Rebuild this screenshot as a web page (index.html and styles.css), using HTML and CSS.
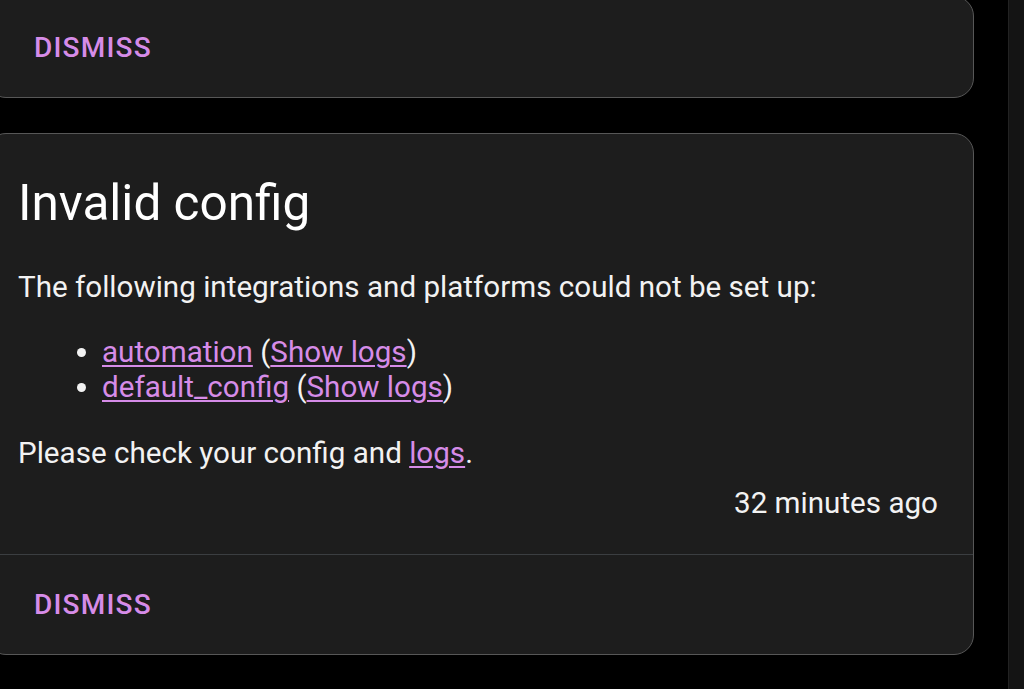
FILE: index.html
```html
<!DOCTYPE html>
<html lang="en">
<head>
    <meta charset="UTF-8">
    <meta name="viewport" content="width=device-width, initial-scale=1.0">
    <title>Notifications</title>
    <link rel="stylesheet" href="styles.css">
</head>
<body>
    <div class="main">
        <div class="feed">
            <div class="card card-cut">
                <div class="card-actions">
                    <button class="btn-dismiss">Dismiss</button>
                </div>
            </div>

            <div class="card">
                <div class="card-content">
                    <h1 class="card-title">Invalid config</h1>
                    <p class="first">The following integrations and platforms could not be set up:</p>
                    <ul>
                        <li><a href="#">automation</a> (<a href="#">Show logs</a>)</li>
                        <li><a href="#">default_config</a> (<a href="#">Show logs</a>)</li>
                    </ul>
                    <p class="last">Please check your config and <a href="#">logs</a>.</p>
                    <div class="time">32 minutes ago</div>
                </div>
                <div class="card-actions">
                    <button class="btn-dismiss">Dismiss</button>
                </div>
            </div>
        </div>
    </div>
    <div class="scroll-strip"></div>
</body>
</html>
```

FILE: styles.css
```css
/* page */
html, body {
    height: 100%;
}

body {
    margin: 0;
    background: #000;
    color: #f2f2f2;
    font-family: Roboto, "Noto Sans", sans-serif;
    display: flex;
    overflow: hidden;
}

.main {
    flex: 1;
    min-width: 0;
}

.scroll-strip {
    width: 15px;
    background: #141414;
    border-left: 1px solid #222;
}

/* notification list */
.feed {
    display: flex;
    flex-direction: column;
    gap: 35px;
    margin: -4px 34px 0 -14px;
}

.card {
    background: #1d1d1d;
    border: 1px solid #575757;
    border-radius: 20px;
}

.card-content {
    padding: 37px 35px 33px 31px;
    font-size: 29.6px;
    line-height: 35px;
}

.card-title {
    margin: 0;
    font-size: 49.5px;
    line-height: 64px;
    font-weight: 400;
    color: #fff;
}

.card-content p {
    margin: 0;
}

.card-content p.first {
    margin-top: 35px;
}

.card-content ul {
    margin: 30px 0 31px;
    padding-left: 84px;
}

.card-content a {
    color: #d68ce8;
    text-decoration: underline;
    text-underline-offset: 3px;
    text-decoration-thickness: 2px;
}

.time {
    margin-top: 15px;
    text-align: right;
}

.card-actions {
    height: 100px;
    border-top: 1px solid #3b3e41;
    display: flex;
    align-items: center;
    padding-left: 47px;
    box-sizing: border-box;
}

.card-cut .card-actions {
    border-top: none;
}

.btn-dismiss {
    background: none;
    border: none;
    padding: 0;
    font-family: Roboto, sans-serif;
    font-size: 28px;
    font-weight: 500;
    letter-spacing: 1.2px;
    text-transform: uppercase;
    color: #d68ce8;
    cursor: pointer;
}
```
